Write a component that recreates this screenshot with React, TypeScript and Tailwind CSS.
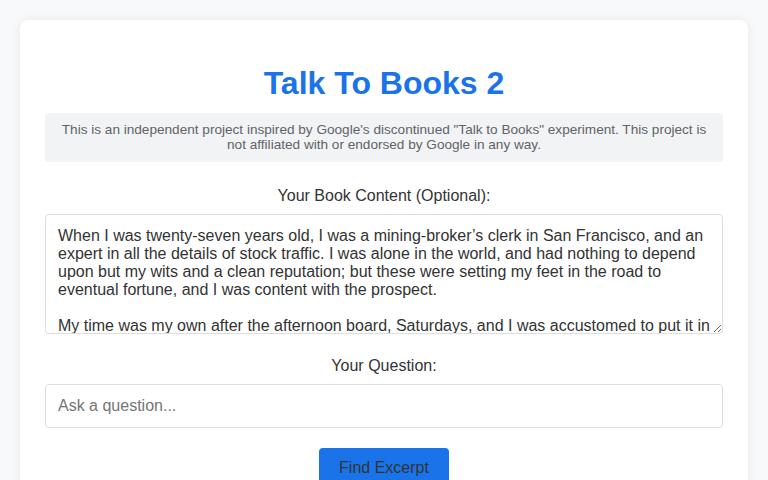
import { useState } from 'react';

const BOOK_TEXT = `When I was twenty-seven years old, I was a mining-broker’s clerk in San Francisco, and an expert in all the details of stock traffic. I was alone in the world, and had nothing to depend upon but my wits and a clean reputation; but these were setting my feet in the road to eventual fortune, and I was content with the prospect.

My time was my own after the afternoon board, Saturdays, and I was accustomed to put it in on a little sail-boat on the bay. One day I ventured too far, and was carried out to sea.`;

function App() {
  const [content, setContent] = useState(BOOK_TEXT);
  const [question, setQuestion] = useState('');

  return (
    <div className="min-h-screen bg-[#f8f9fa] px-5 pt-5 font-['Liberation_Sans',Arial,sans-serif] text-[#333]">
      <div className="rounded-lg bg-white px-[25px] pt-[25px] pb-10 shadow-[0_0_10px_rgba(0,0,0,0.08)]">
        <h1 className="mt-[20px] mb-[11px] text-center text-[32px] leading-[37px] font-bold text-[#1a73e8]">
          Talk To Books 2
        </h1>
        <div className="rounded bg-[#f1f3f4] px-4 py-[9px] text-center text-[13.6px] leading-[15.4px] text-[#5f6368]">
          This is an independent project inspired by Google's discontinued "Talk to Books" experiment. This
          project is not affiliated with or endorsed by Google in any way.
        </div>

        <label className="mt-[25px] mb-[9px] block text-center text-base leading-[18px]">
          Your Book Content (Optional):
        </label>
        <textarea
          value={content}
          onChange={(e) => setContent(e.target.value)}
          className="block h-[120px] w-full rounded border border-[#ddd] px-3 pt-3 text-base leading-[18px] text-[#333] outline-none"
        />

        <label className="mt-[23px] mb-[9px] block text-center text-base leading-[18px]">Your Question:</label>
        <input
          value={question}
          onChange={(e) => setQuestion(e.target.value)}
          placeholder="Ask a question..."
          className="block h-[44px] w-full rounded border border-[#ddd] px-3 text-base text-[#333] outline-none placeholder:text-[#757575]"
        />

        <div className="mt-5 flex justify-center">
          <button className="h-10 rounded bg-[#1a73e8] px-5 text-base text-[#333]">Find Excerpt</button>
        </div>
      </div>
    </div>
  );
}

export default App;
